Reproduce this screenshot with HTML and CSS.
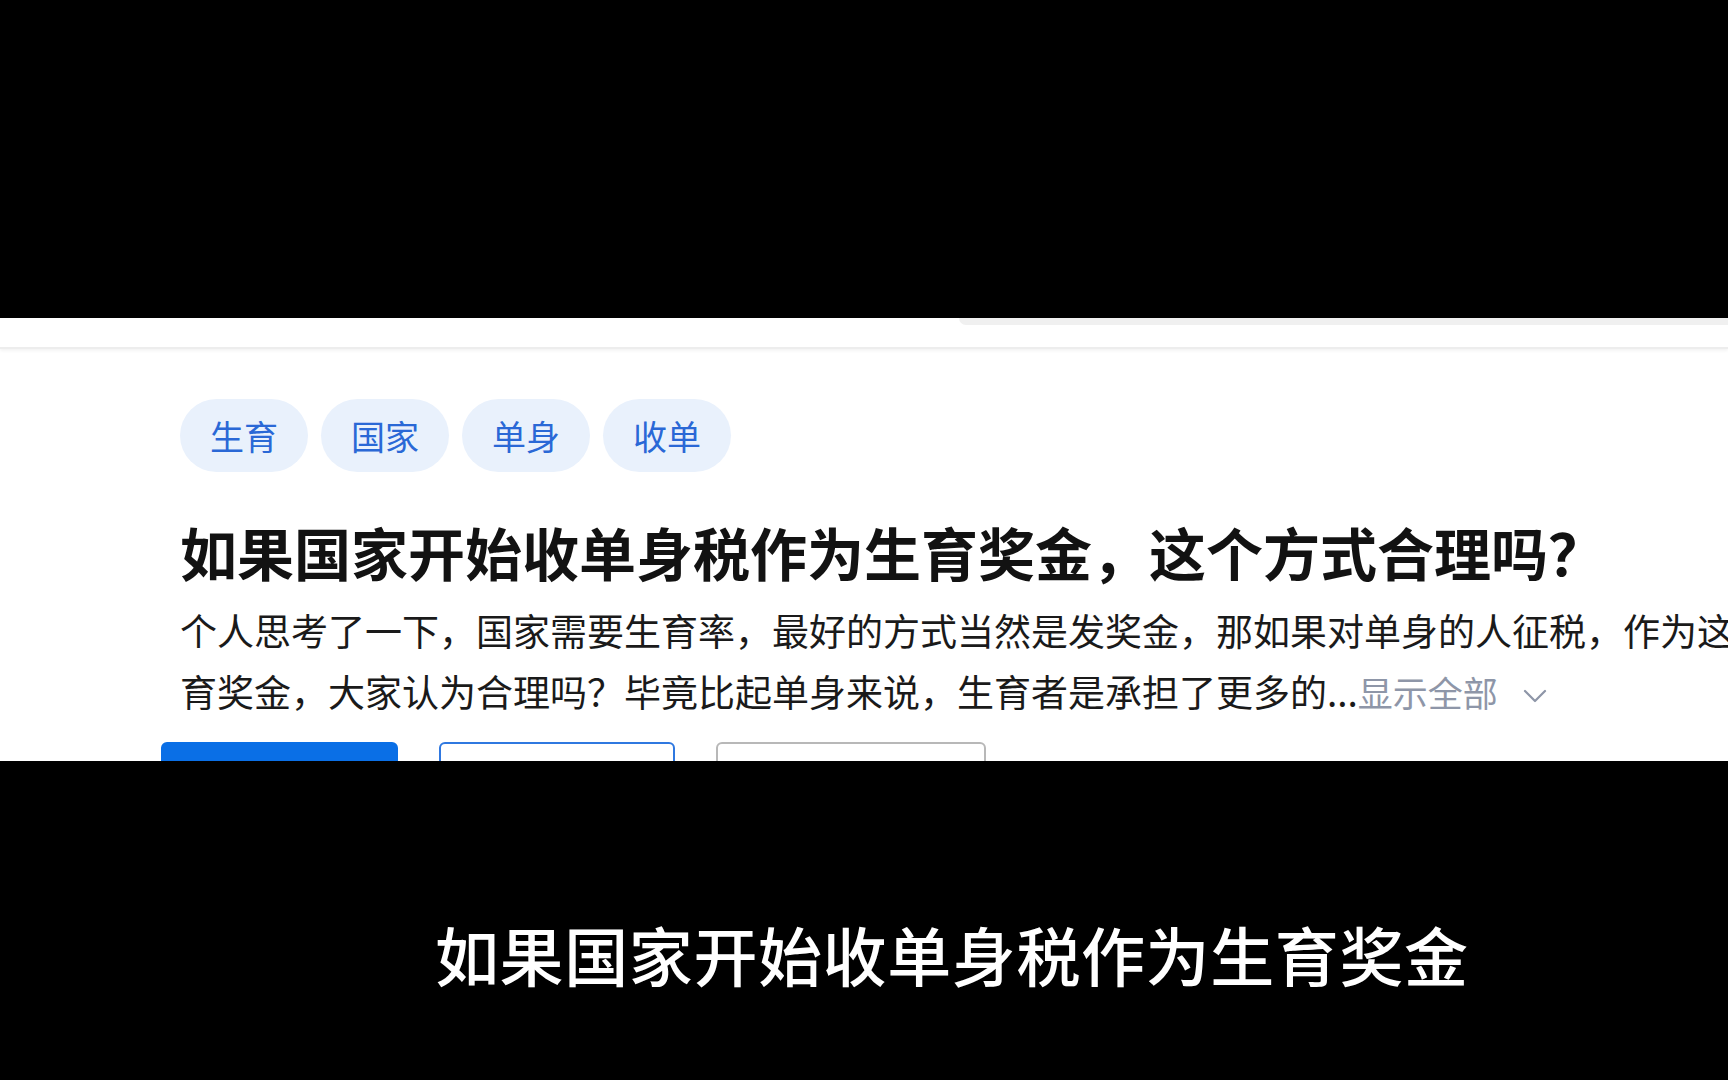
FILE: index.html
```html
<!DOCTYPE html>
<html lang="zh-CN">
	<head>
		<meta charset="UTF-8" />
		<meta name="viewport" content="width=device-width, initial-scale=1.0" />
		<title>如果国家开始收单身税作为生育奖金</title>
		<link rel="stylesheet" href="styles.css">
	</head>
	<body>
		<div class="letterbox-top"></div>
		<div class="page">
			<div class="header">
				<div class="search-edge"></div>
			</div>
			<div class="question">
				<div class="tags">
					<span class="tag">生育</span>
					<span class="tag">国家</span>
					<span class="tag">单身</span>
					<span class="tag">收单</span>
				</div>
				<h1 class="title">如果国家开始收单身税作为生育奖金，这个方式合理吗？</h1>
				<div class="detail">
					个人思考了一下，国家需要生育率，最好的方式当然是发奖金，那如果对单身的人征税，作为这生育奖金，大家认为合理吗？毕竟比起单身来说，生育者是承担了更多的...<span class="show-all">显示全部<svg class="chevron" viewBox="0 0 24 24" width="30" height="30"><path d="M4 8l8 8 8-8" fill="none" stroke="currentColor" stroke-width="1.8" stroke-linecap="round" stroke-linejoin="round"/></svg></span>
				</div>
				<div class="actions">
					<button class="btn btn-primary" type="button"></button>
					<button class="btn btn-outline" type="button"></button>
					<button class="btn btn-plain" type="button"></button>
				</div>
			</div>
		</div>
		<div class="letterbox-bottom">
			<p class="subtitle">如果国家开始收单身税作为生育奖金</p>
		</div>
	</body>
</html>
```

FILE: styles.css
```css
body {
	margin: 0;
	background: #000;
	font-family: "Noto Sans CJK SC", "Noto Sans", sans-serif;
	text-spacing-trim: space-all;
	overflow: hidden;
}
.letterbox-top {
	height: 318px;
	background: #000;
}
.page {
	height: 443px;
	background: #fff;
	overflow: hidden;
}
.header {
	height: 29px;
	border-bottom: 2px solid #ededed;
	box-shadow: 0 2px 3px #f4f4f4;
	display: flex;
	justify-content: flex-end;
}
.search-edge {
	width: 769px;
	height: 7px;
	background: #f0f0f0;
	border-bottom-left-radius: 10px;
}
.question {
	width: 1600px;
	padding: 50px 0 0 180px;
}
.tags {
	display: flex;
	gap: 13px;
}
.tag {
	height: 73px;
	line-height: 73px;
	padding: 0 30px;
	border-radius: 37px;
	background: #e9f1fc;
	color: #2a68d6;
	font-size: 34px;
}
.title {
	margin: 44px 0 0;
	font-size: 57px;
	line-height: 70px;
	font-weight: 700;
	color: #121212;
	white-space: nowrap;
}
.detail {
	margin-top: 14px;
	font-size: 37px;
	line-height: 61px;
	color: #1a1a1a;
}
.show-all {
	color: #8e96a8;
	font-size: 35px;
}
.chevron {
	margin-left: 22px;
	vertical-align: -4px;
}
.actions {
	display: flex;
	gap: 41px;
	margin: 20px 0 0 -19px;
}
.btn {
	height: 60px;
	border-radius: 6px;
	background: #fff;
}
.btn-primary {
	width: 237px;
	background: #0a6fe6;
	border: 2px solid #0a6fe6;
}
.btn-outline {
	width: 236px;
	border: 2px solid #2f78e0;
}
.btn-plain {
	width: 270px;
	border: 2px solid #b8b8b8;
}
.letterbox-bottom {
	height: 319px;
	background: #000;
	padding-left: 435px;
	box-sizing: border-box;
}
.subtitle {
	margin: 0;
	padding-top: 159px;
	font-size: 64px;
	line-height: 66px;
	font-weight: 500;
	color: #fff;
	letter-spacing: 0.6px;
}
```
